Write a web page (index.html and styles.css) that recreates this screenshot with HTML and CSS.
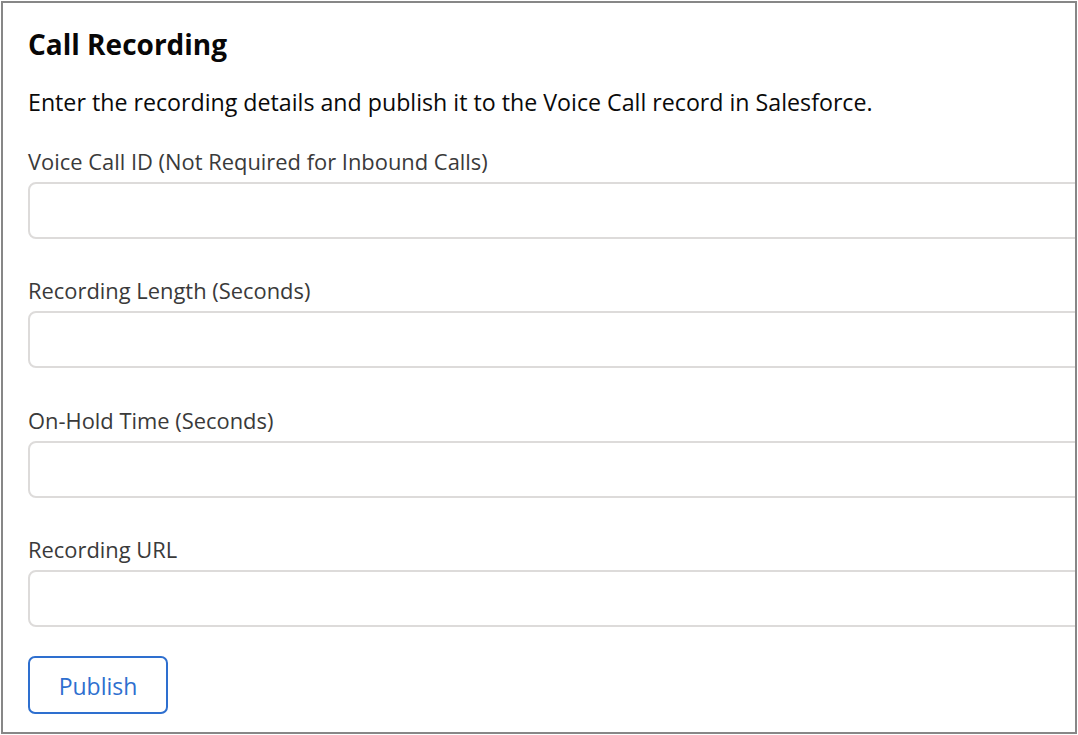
FILE: index.html
```html
<!DOCTYPE html>
<html lang="en">
<head>
<meta charset="utf-8">
<title>Call Recording</title>
<link rel="stylesheet" href="styles.css">
</head>
<body>
<div class="frame">
  <h1 class="title">Call Recording</h1>
  <p class="desc">Enter the recording details and publish it to the Voice Call record in Salesforce.</p>
  <div class="field">
    <label class="label" for="f1">Voice Call ID (Not Required for Inbound Calls)</label>
    <input class="input" id="f1" type="text">
  </div>
  <div class="field">
    <label class="label" for="f2">Recording Length (Seconds)</label>
    <input class="input" id="f2" type="text">
  </div>
  <div class="field">
    <label class="label" for="f3">On-Hold Time (Seconds)</label>
    <input class="input" id="f3" type="text">
  </div>
  <div class="field">
    <label class="label" for="f4">Recording URL</label>
    <input class="input" id="f4" type="text">
  </div>
  <button class="btn" type="button">Publish</button>
</div>
</body>
</html>
```
FILE: styles.css
```css
html, body {
  margin: 0;
  padding: 0;
  background: #ffffff;
}
body {
  font-family: "Open Sans", "Noto Sans", sans-serif;
  color: #181818;
}
.frame {
  margin: 1px 0 0 1px;
  width: 1076px;
  height: 733px;
  box-sizing: border-box;
  border: 2px solid #878787;
  overflow: hidden;
  padding: 25px 0 0 25px;
}
.title {
  margin: 0;
  font-size: 28px;
  line-height: 32px;
  font-weight: 700;
  color: #080707;
}
.desc {
  margin: 29px 0 0 0;
  font-size: 23.2px;
  line-height: 26px;
  color: #0a0a0a;
}
.field {
  margin-top: 35px;
  display: flex;
  flex-direction: column;
}
.field + .field {
  margin-top: 40.4px;
}
.label {
  font-size: 21.9px;
  line-height: 24px;
  color: #3a3a3a;
  margin-bottom: 8px;
}
.input {
  width: 1100px;
  height: 57px;
  box-sizing: border-box;
  border: 2px solid #dddbda;
  border-radius: 8px;
  background: #fff;
  margin: 0;
  padding: 0 14px;
  font: inherit;
}
.btn {
  margin-top: 29px;
  width: 140px;
  height: 58px;
  box-sizing: border-box;
  border: 2px solid #2e6fcf;
  border-radius: 7px;
  background: #fff;
  color: #2e6fcf;
  font-family: inherit;
  font-size: 23px;
  line-height: 26px;
  padding: 2px 0 0 0;
}
```
